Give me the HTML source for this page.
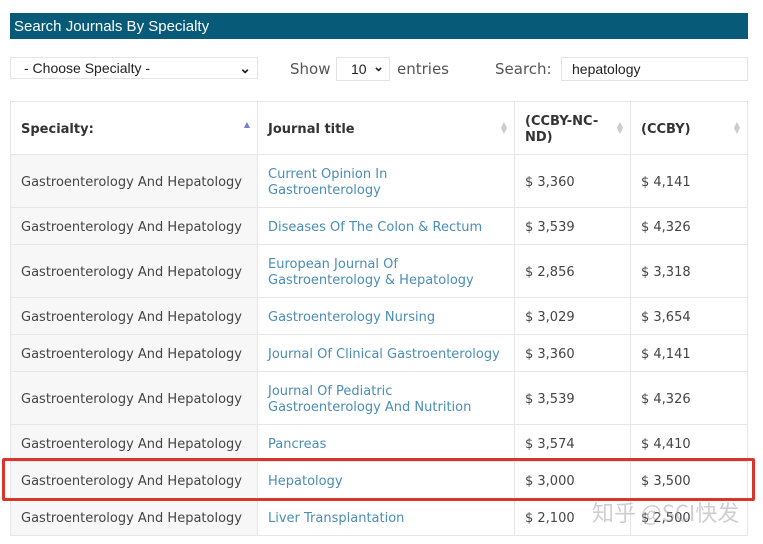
<!DOCTYPE html>
<html><head><meta charset="utf-8"><style>
body{margin:0;background:#fff;width:763px;height:544px;overflow:hidden;position:relative;font-family:"DejaVu Sans",Verdana,sans-serif;}
.bar{position:absolute;left:10px;top:13px;width:738px;height:26px;background:#075b79;color:#fff;line-height:27px;font-family:"Liberation Sans",sans-serif;font-size:15px;}
.bar span{padding-left:4px}
.sel{position:absolute;left:10px;top:57px;width:248px;height:22px;border:1px solid #e3e3e3;box-sizing:border-box;font-family:"Liberation Sans",sans-serif;font-size:14px;color:#222;line-height:21px;padding-left:13px}
.lbl{position:absolute;font-size:15px;color:#555;top:60px}
.num{position:absolute;left:336px;top:57px;width:54px;height:24px;border:1px solid #e3e3e3;box-sizing:border-box;font-family:"Liberation Sans",sans-serif;font-size:14px;line-height:23px;padding-left:14px;color:#222}
.srch{position:absolute;left:561px;top:57px;width:187px;height:24px;border:1px solid #e3e3e3;box-sizing:border-box;font-family:"Liberation Sans",sans-serif;font-size:14px;line-height:23px;padding-left:10px;color:#222}
table{position:absolute;left:10px;top:101px;border-collapse:collapse;width:737px;table-layout:fixed;font-size:13px;color:#444}
td,th{border:1px solid #e6e6e6;padding:3px 10px 0;text-align:left;vertical-align:middle;line-height:16px;box-sizing:border-box}
th{font-weight:bold;height:53px;position:relative;color:#333}
td:first-child{background:#f7f7f7}
td a{color:#4a8db5;text-decoration:none}
.ar{position:absolute;right:7px;top:20px;color:#ccc;font-size:8px;line-height:6px}
.red{position:absolute;left:2px;top:458px;width:747px;height:37px;border:3px solid #d9352b;border-radius:2px}
.wm{position:absolute;left:592px;top:496px;font-family:"Noto Sans CJK SC",sans-serif;font-size:22px;color:rgba(160,160,160,.5)}
</style></head><body>
<div class="bar"><span>Search Journals By Specialty</span></div>
<div class="sel">- Choose Specialty -<span style="position:absolute;right:6px;top:0;font-size:14px;font-weight:bold">&#x2304;</span></div>
<div class="lbl" style="left:290px">Show</div>
<div class="num">10<span style="position:absolute;right:5px;top:-3px;font-size:13px;font-weight:bold">&#x2304;</span></div>
<div class="lbl" style="left:397px">entries</div>
<div class="lbl" style="left:495px">Search:</div>
<div class="srch">hepatology</div>
<table>
<colgroup><col style="width:247px"><col style="width:257px"><col style="width:116px"><col style="width:117px"></colgroup>
<tr><th>Specialty:<span class="ar" style="color:#7b7fc9;top:20px">&#9650;</span></th><th>Journal title<span class="ar">&#9650;<br>&#9660;</span></th><th>(CCBY-NC-<br>ND)<span class="ar">&#9650;<br>&#9660;</span></th><th>(CCBY)<span class="ar">&#9650;<br>&#9660;</span></th></tr>
<tr style="height:53px"><td>Gastroenterology And Hepatology</td><td><a>Current Opinion In<br>Gastroenterology</a></td><td>$ 3,360</td><td>$ 4,141</td></tr>
<tr style="height:37px"><td>Gastroenterology And Hepatology</td><td><a>Diseases Of The Colon &amp; Rectum</a></td><td>$ 3,539</td><td>$ 4,326</td></tr>
<tr style="height:53px"><td>Gastroenterology And Hepatology</td><td><a>European Journal Of<br>Gastroenterology &amp; Hepatology</a></td><td>$ 2,856</td><td>$ 3,318</td></tr>
<tr style="height:37px"><td>Gastroenterology And Hepatology</td><td><a>Gastroenterology Nursing</a></td><td>$ 3,029</td><td>$ 3,654</td></tr>
<tr style="height:37px"><td>Gastroenterology And Hepatology</td><td><a>Journal Of Clinical Gastroenterology</a></td><td>$ 3,360</td><td>$ 4,141</td></tr>
<tr style="height:53px"><td>Gastroenterology And Hepatology</td><td><a>Journal Of Pediatric<br>Gastroenterology And Nutrition</a></td><td>$ 3,539</td><td>$ 4,326</td></tr>
<tr style="height:37px"><td>Gastroenterology And Hepatology</td><td><a>Pancreas</a></td><td>$ 3,574</td><td>$ 4,410</td></tr>
<tr style="height:37px"><td>Gastroenterology And Hepatology</td><td><a>Hepatology</a></td><td>$ 3,000</td><td>$ 3,500</td></tr>
<tr style="height:37px"><td>Gastroenterology And Hepatology</td><td><a>Liver Transplantation</a></td><td>$ 2,100</td><td>$ 2,500</td></tr>
</table>
<div class="red"></div>
<div class="wm">知乎 @SCI快发</div>
</body></html>
